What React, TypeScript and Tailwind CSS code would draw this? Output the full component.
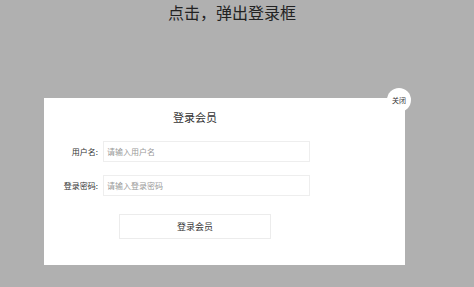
import React from 'react';

const font = "font-['Noto_Sans_CJK_SC','Noto_Sans',sans-serif]";

export default function App() {
  return (
    <div className={`w-[474px] h-[287px] overflow-hidden bg-[#b0b0b0] ${font}`}>
      {/* 页面标题 */}
      <h1 className="ml-[168px] pt-[2px] text-[16px] leading-[20px] text-[#222] font-normal">
        点击，弹出登录框
      </h1>

      {/* 登录弹窗 */}
      <div className="relative ml-[44px] mt-[76px] w-[361px] bg-white pt-[11px] pb-[26px]">
        <button className="absolute right-[-6px] top-[-10px] flex h-[24px] w-[24px] items-center justify-center rounded-full bg-white text-[7px] leading-none text-[#333]">
          关闭
        </button>

        <p className="ml-[129px] w-[44px] text-center text-[11px] leading-[16px] text-[#333]">
          登录会员
        </p>

        <div className="mt-[16px] flex items-center">
          <label className="w-[54px] text-right text-[8px] leading-[21px] text-[#333]">用户名:</label>
          <div className="ml-[5px] flex h-[21px] w-[207px] items-center border border-[#eeeeee] pl-[3px] text-[8px] text-[#999]">
            请输入用户名
          </div>
        </div>

        <div className="mt-[13px] flex items-center">
          <label className="w-[54px] text-right text-[8px] leading-[21px] text-[#333]">登录密码:</label>
          <div className="ml-[5px] flex h-[21px] w-[207px] items-center border border-[#eeeeee] pl-[3px] text-[8px] text-[#999]">
            请输入登录密码
          </div>
        </div>

        <button className="ml-[75px] mt-[18px] flex h-[25px] w-[152px] items-center justify-center border border-[#ececec] bg-white text-[9px] text-[#333]">
          登录会员
        </button>
      </div>
    </div>
  );
}
